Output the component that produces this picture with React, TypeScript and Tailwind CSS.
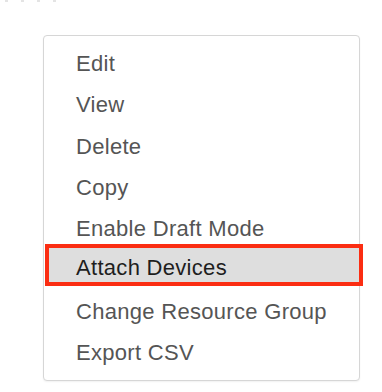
import React from 'react';

const items = [
  'Edit',
  'View',
  'Delete',
  'Copy',
  'Enable Draft Mode',
  'Attach Devices',
  'Change Resource Group',
  'Export CSV',
];

const App: React.FC = () => {
  const selected = 'Attach Devices';

  return (
    <div className="w-[382px] h-[392px] bg-white font-['Liberation_Sans',Arial,sans-serif] overflow-hidden">
      {/* cut-off text from the row above */}
      <div className="flex h-[3px] gap-[13px] pl-[5px]">
        <span className="w-[3px] h-[2px] bg-[#e4e4e4]" />
        <span className="w-[3px] h-[2px] bg-[#e4e4e4]" />
        <span className="w-[3px] h-[2px] bg-[#e4e4e4]" />
        <span className="w-[3px] h-[2px] bg-[#e4e4e4]" />
      </div>

      <div className="ml-[43px] mt-[32px] w-[317px] h-[346px] rounded-[4px] border border-[#d6d6d6] bg-white py-[7px] shadow-[0_1px_2px_rgba(0,0,0,0.06)]">
        {items.map((label) => {
          const active = label === selected;
          return (
            <div key={label} className="relative h-[41.3px] flex items-center pl-[32px]">
              {active && (
                <div className="absolute left-[1px] -right-[4px] top-[-5.5px] bottom-[5px] border-[4px] border-[#fb2d12] bg-[#dedede]" />
              )}
              <span
                className={`relative text-[22px] tracking-[0.3px] ${active ? 'text-[#1e1e1e] -top-[3px]' : 'text-[#555555]'}`}
              >
                {label}
              </span>
            </div>
          );
        })}
      </div>
    </div>
  );
};

export default App;
